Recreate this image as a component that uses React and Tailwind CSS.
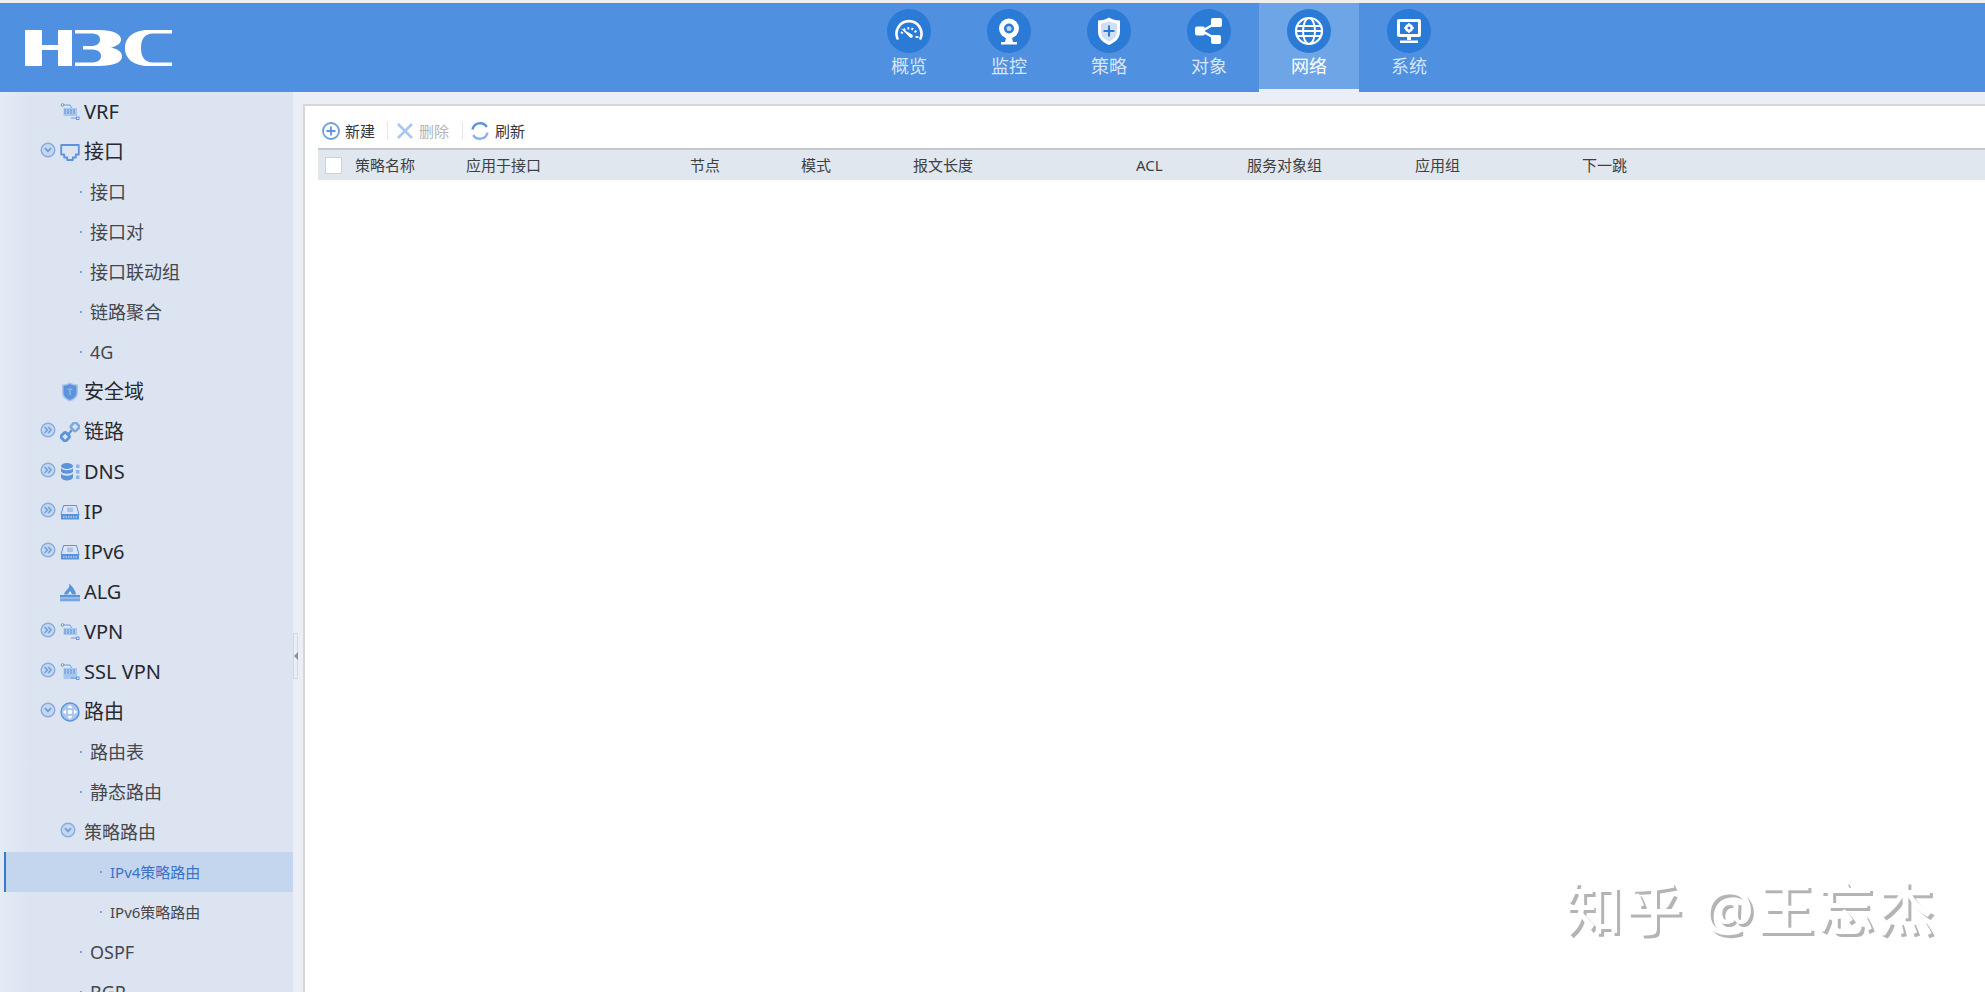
import React from 'react';

const Logo = () => (
  <svg width="148" height="38" viewBox="0 0 148 38" className="block">
    <g fill="#fff">
      {/* H */}
      <rect x="0" y="0" width="17" height="36" />
      <rect x="33" y="0" width="14" height="36" />
      <rect x="16" y="15" width="18" height="5" />
      {/* 3 */}
      <path d="M50 0H74C88 0 96 4 96 9.500C96 13.500 92 16 86 17.500C93 19 97 22 97 26.500C97 32.500 88 36 74 36H50V32.500H66C73 32.500 76 30 76 26C76 22 73 19.500 66 19.500H58V16H66C72 16 75 13.500 75 9.500C75 5.500 72 3.500 66 3.500H50Z" />
      {/* C */}
      <path d="M147 0H124C109 0 100 7 100 18C100 29 109 36 124 36H147V32.500H128C119 32.500 116 26 116 18C116 10 119 3.500 128 3.500H147Z" />
    </g>
  </svg>
);

const Circle = ({ children }) => (
  <div className="w-[44px] h-[44px] rounded-full bg-[#2b7ad6] flex items-center justify-center">
    <svg width="30" height="30" viewBox="0 0 30 30" fill="none">{children}</svg>
  </div>
);

const navItems = [
  {
    label: '概览',
    icon: (
      <>
        <path d="M3.500 22.500A12.500 12.500 0 1 1 26.500 22.500" stroke="#fff" strokeWidth="2.600" strokeLinecap="round" />
        <path d="M7.500 17.500A8 8 0 0 1 22.500 17.500" stroke="#fff" strokeWidth="2.400" strokeDasharray="1.800 2.200" />
        <path d="M6.500 12l11.500 6.500c1.700 1.300.6 4-1.700 3.200z" fill="#fff" />
        <path d="M21.500 21h3" stroke="#fff" strokeWidth="2" />
      </>
    ),
  },
  {
    label: '监控',
    icon: (
      <>
        <circle cx="15" cy="12.500" r="10" fill="#fff" />
        <circle cx="15" cy="12.500" r="5" fill="#2b7ad6" />
        <circle cx="15" cy="12.500" r="2.500" fill="#bcd6f5" />
        <path d="M12 22h6l1 4h-8zM7 26h16v2.500H7z" fill="#fff" />
      </>
    ),
  },
  {
    label: '策略',
    icon: (
      <>
        <path d="M15 1.500c3 2 7 3 11 3v11c0 7-5 11-11 13.500C9 26.500 4 22.500 4 15.500v-11c4 0 8-1 11-3z" fill="#fff" />
        <path d="M15 5c2.500 1.500 5.500 2.200 8 2.500v8c0 5-3.500 8-8 10-4.500-2-8-5-8-10v-8c2.500-.3 5.500-1 8-2.500z" fill="#cfe0f6" />
        <path d="M15 9.500v11M9.500 15h11" stroke="#2b7ad6" strokeWidth="2" />
      </>
    ),
  },
  {
    label: '对象',
    icon: (
      <>
        <path d="M8 15L22 7M8 15l14 8" stroke="#fff" strokeWidth="2.500" />
        <rect x="1" y="10.500" width="10" height="9" rx="2" fill="#fff" />
        <rect x="17" y="2" width="11" height="9" rx="2" fill="#fff" />
        <rect x="17" y="19" width="10" height="9" rx="2" fill="#fff" />
      </>
    ),
  },
  {
    label: '网络',
    icon: (
      <>
        <circle cx="15" cy="15" r="13" stroke="#fff" strokeWidth="2.200" />
        <ellipse cx="15" cy="15" rx="6" ry="13" stroke="#fff" strokeWidth="2" />
        <path d="M3.500 10h23M3.500 20h23M2 15h26" stroke="#fff" strokeWidth="2" />
      </>
    ),
  },
  {
    label: '系统',
    icon: (
      <>
        <rect x="3" y="3" width="24" height="18" rx="2" fill="#fff" />
        <rect x="6" y="6" width="18" height="12" fill="#2b7ad6" />
        <circle cx="15" cy="12" r="4" fill="#fff" />
        <circle cx="15" cy="12" r="1.500" fill="#2b7ad6" />
        <path d="M15 7v2M15 15v2M10 12h2M18 12h2" stroke="#fff" strokeWidth="1.500" />
        <path d="M13 21h4v3h-4zM6 24.500h18V27H6z" fill="#fff" />
      </>
    ),
  },
];

const Expander = ({ open }) => (
  <svg width="16" height="16" viewBox="0 0 16 16" fill="none" className="shrink-0 mt-[-4px]">
    <circle cx="8" cy="8" r="6.800" fill="#c6d6ef" stroke="#86ace0" strokeWidth="1.400" />
    {open ? (
      <path d="M5 6.200L8 9.400l3-3.200" stroke="#6f9fd8" strokeWidth="1.900" />
    ) : (
      <path d="M4.600 5L7.400 8 4.600 11M8.200 5L11 8 8.200 11" stroke="#6f9fd8" strokeWidth="1.600" />
    )}
  </svg>
);

const blue = '#5b93dc';

const VpnGlyph = ({ box }) => (
  <svg width="20" height="20" viewBox="0 0 20 20" fill="none">
    <circle cx="2.500" cy="3" r="1.400" stroke={blue} strokeWidth=".9" />
    <path d="M4 3h6l1.500 3" stroke={blue} strokeWidth=".9" />
    <rect x="3.500" y="6" width="13.500" height={box} fill="#a9c7ee" />
    <path d="M5 7v5M8 7v5M11 7v5M14 7v5" stroke={blue} strokeWidth="1" />
    <path d="M11 16h6" stroke={blue} strokeWidth=".9" />
    <rect x="16.500" y="15" width="2.500" height="2.500" stroke={blue} strokeWidth=".9" />
  </svg>
);

const IpCard = () => (
  <svg width="20" height="20" viewBox="0 0 20 20" fill="none">
    <path d="M3.500 3.500h13l2.500 9H1z" stroke={blue} strokeWidth="1" />
    <rect x="7" y="5.500" width="6" height="4.500" fill="#a9c4ea" />
    <rect x="1" y="12.500" width="18" height="5" fill={blue} />
    <path d="M3 15h14" stroke="#dfe7f3" strokeWidth="1" strokeDasharray="1.500 1" />
  </svg>
);

const sideIcons = {
  vrf: <VpnGlyph box={8} />,
  vpn: <VpnGlyph box={7} />,
  ssl: <VpnGlyph box={11} />,
  port: (
    <svg width="20" height="20" viewBox="0 0 20 20" fill="none">
      <path d="M1.200 3h17.600v9.500h-3v3h-3v2.500H7.200v-2.500h-3v-3h-3z" stroke={blue} strokeWidth="1.800" strokeLinejoin="round" />
    </svg>
  ),
  shield: (
    <svg width="20" height="20" viewBox="0 0 20 20">
      <path d="M10 .5c2.700 1.300 5.500 2 8 2v8.500c0 4.300-3.500 7-8 8.500-4.500-1.500-8-4.200-8-8.500V2.500c2.500 0 5.300-.7 8-2z" fill="#a9c7ee" />
      <path d="M10 2c2.200 1 4.500 1.700 6.500 1.800V11c0 3.400-2.900 5.700-6.500 7-3.600-1.300-6.500-3.600-6.500-7V3.800C5.500 3.700 7.800 3 10 2z" fill={blue} />
      <path d="M7.500 6.500h5v1.500h-1.700v5H9.200V8H7.500z" fill="#8db3e6" />
    </svg>
  ),
  link: (
    <svg width="20" height="20" viewBox="0 0 20 20" fill="none">
      <path d="M7 13.500l6.500-7" stroke={blue} strokeWidth="2.400" />
      <rect x="11.500" y="1.300" width="7" height="7" rx="2" transform="rotate(45 15 4.800)" stroke="#7fa8de" strokeWidth="2.600" />
      <rect x="1.700" y="11.200" width="7" height="7" rx="2" transform="rotate(45 5.200 14.700)" stroke={blue} strokeWidth="2.800" />
    </svg>
  ),
  dns: (
    <svg width="20" height="20" viewBox="0 0 20 20">
      <ellipse cx="7" cy="4" rx="6" ry="3" fill={blue} />
      <path d="M1 6c1 1.500 3 2.200 6 2.200S12 7.500 13 6v3.500c-1 1.500-3 2.200-6 2.200s-5-.7-6-2.200z" fill={blue} />
      <path d="M1 11.500c1 1.500 3 2.200 6 2.200s5-.7 6-2.200v4c-1 2-3 3-6 3s-5-1-6-3z" fill={blue} />
      <rect x="16" y="2.500" width="3.500" height="3.500" fill="#8db3e6" />
      <rect x="16" y="8" width="3.500" height="3.500" fill="#8db3e6" />
      <rect x="16" y="13.500" width="3.500" height="3.500" fill="#8db3e6" />
    </svg>
  ),
  ip: <IpCard />,
  alg: (
    <svg width="20" height="20" viewBox="0 0 20 20" fill="none">
      <path d="M4 12.500c.5-3 3-4.500 4.500-6.500.7-1 1-2.500.7-4.500C12 4 15.500 8 16 12.500z" fill={blue} />
      <path d="M8 12.500c.3-1.500 1.300-2.500 2-3.500.8 1 1.800 2 2 3.500z" fill="#dfe6f2" />
      <rect x="0" y="13" width="20" height="2.500" fill={blue} />
      <rect x="0" y="16.300" width="20" height="3" fill="#79a6e0" />
    </svg>
  ),
  route: (
    <svg width="20" height="20" viewBox="0 0 20 20" fill="none">
      <circle cx="10" cy="10" r="9" fill="#a9c7ee" stroke={blue} strokeWidth="1.400" />
      <path d="M10 2.800l2.600 3.200H7.400zM10 17.200L7.400 14h5.200zM2.800 10L6 7.400v5.200zM17.200 10L14 12.600V7.400z" fill="#fff" />
      <circle cx="10" cy="10" r="2.200" fill="#fff" />
    </svg>
  ),
};

const rows = [
  { text: 'VRF', level: 1, icon: 'vrf' },
  { text: '接口', level: 1, icon: 'port', exp: 'open' },
  { text: '接口', level: 2 },
  { text: '接口对', level: 2 },
  { text: '接口联动组', level: 2 },
  { text: '链路聚合', level: 2 },
  { text: '4G', level: 2 },
  { text: '安全域', level: 1, icon: 'shield' },
  { text: '链路', level: 1, icon: 'link', exp: 'closed' },
  { text: 'DNS', level: 1, icon: 'dns', exp: 'closed' },
  { text: 'IP', level: 1, icon: 'ip', exp: 'closed' },
  { text: 'IPv6', level: 1, icon: 'ip', exp: 'closed' },
  { text: 'ALG', level: 1, icon: 'alg' },
  { text: 'VPN', level: 1, icon: 'vpn', exp: 'closed' },
  { text: 'SSL VPN', level: 1, icon: 'ssl', exp: 'closed' },
  { text: '路由', level: 1, icon: 'route', exp: 'open' },
  { text: '路由表', level: 2 },
  { text: '静态路由', level: 2 },
  { text: '策略路由', level: 'group' },
  { text: 'IPv4策略路由', level: 3, active: true },
  { text: 'IPv6策略路由', level: 3 },
  { text: 'OSPF', level: 2 },
  { text: 'BGP', level: 2 },
];

const Dot = () => <span className="w-[2px] h-[2px] bg-[#5b93dc] rounded-full shrink-0" />;

const SideRow = ({ row }) => {
  if (row.level === 1) {
    return (
      <div className="h-[40px] flex items-center text-[20px] text-[#26292e] pl-[40px]">
        <div className="w-[20px] flex justify-start">{row.exp && <Expander open={row.exp === 'open'} />}</div>
        <div className="w-[20px] h-[20px] shrink-0 mr-[4px]">{sideIcons[row.icon]}</div>
        <span>{row.text}</span>
      </div>
    );
  }
  if (row.level === 'group') {
    return (
      <div className="h-[40px] flex items-center text-[18px] text-[#44474c] pl-[60px]">
        <div className="w-[24px]">
          <Expander open />
        </div>
        <span>{row.text}</span>
      </div>
    );
  }
  if (row.level === 2) {
    return (
      <div className="h-[40px] flex items-center gap-[8px] text-[18px] text-[#44474c] pl-[80px]">
        <Dot />
        <span>{row.text}</span>
      </div>
    );
  }
  return (
    <div
      className={
        row.active
          ? 'h-[40px] ml-[4px] flex items-center gap-[8px] text-[15px] text-[#3a72c8] pl-[94px] bg-[#c3d6ee] border-l-2 border-[#3a78cc]'
          : 'h-[40px] flex items-center gap-[8px] text-[15px] text-[#44474c] pl-[100px]'
      }
    >
      <Dot />
      <span>{row.text}</span>
    </div>
  );
};

const columns = [
  { label: '策略名称', w: 'w-[111px]' },
  { label: '应用于接口', w: 'w-[224px]' },
  { label: '节点', w: 'w-[111px]' },
  { label: '模式', w: 'w-[112px]' },
  { label: '报文长度', w: 'w-[223px]' },
  { label: 'ACL', w: 'w-[111px]' },
  { label: '服务对象组', w: 'w-[168px]' },
  { label: '应用组', w: 'w-[167px]' },
  { label: '下一跳', w: 'w-[120px]' },
];

export default function App() {
  return (
    <div className="w-[1985px] h-[992px] overflow-hidden relative flex flex-col bg-white font-['Noto_Sans','Noto_Sans_CJK_SC',sans-serif]">
      <div className="h-[3px] bg-[#efefef] shrink-0" />

      {/* 顶部导航 */}
      <header className="h-[89px] shrink-0 bg-[#4f90e0] flex">
        <div className="w-[859px] pl-[25px] pt-[27px]">
          <Logo />
        </div>
        <nav className="flex">
          {navItems.map((item) =>
            item.label === '网络' ? (
              <div key={item.label} className="w-[100px] bg-[#6ea5e6] border-b-[3px] border-[#e8eff9] flex flex-col items-center pt-[6px]">
                <Circle>{item.icon}</Circle>
                <span className="text-[18px] leading-[26px] text-white">{item.label}</span>
              </div>
            ) : (
              <div key={item.label} className="w-[100px] flex flex-col items-center pt-[6px]">
                <Circle>{item.icon}</Circle>
                <span className="text-[18px] leading-[26px] text-[#d6e5f8]">{item.label}</span>
              </div>
            )
          )}
        </nav>
      </header>

      <div className="flex-1 flex min-h-0">
        {/* 左侧菜单 */}
        <aside className="w-[293px] shrink-0 bg-linear-to-r from-[#e3ebf7] to-[#dde4f1] to-[30px] overflow-hidden">
          {rows.map((row, i) => (
            <SideRow key={i} row={row} />
          ))}
        </aside>

        <main className="flex-1 bg-[#eceef5] pl-[10px] pt-[12px] relative min-w-0">
          {/* 折叠手柄 */}
          <div className="absolute left-0 top-[541px] w-[5px] h-[46px] border border-[#d3d9e3] flex items-center justify-center">
            <span className="w-0 h-0 border-y-[4px] border-y-transparent border-r-[4px] border-r-[#8a8f98]" />
          </div>

          <div className="h-full bg-white border-l-2 border-t-2 border-[#d4d6da] pl-[13px] pt-[12px]">
            <div className="h-[26px] flex items-center text-[15px] text-[#33363b]">
              <svg width="20" height="20" viewBox="0 0 20 20" fill="none" className="ml-[3px]">
                <circle cx="10" cy="10" r="8" stroke="#6f9fd8" strokeWidth="1.800" />
                <path d="M10 5.500v9M5.500 10h9" stroke="#5b93dc" strokeWidth="1.800" />
              </svg>
              <span className="ml-[4px]">新建</span>
              <span className="w-px h-[18px] bg-[#e4e6ea] ml-[12px]" />
              <svg width="20" height="20" viewBox="0 0 20 20" fill="none" className="ml-[7px]">
                <path d="M3 3l14 14M17 3L3 17" stroke="#a9c7ee" strokeWidth="2.500" />
              </svg>
              <span className="ml-[4px] text-[#b3b5b8]">删除</span>
              <span className="w-px h-[18px] bg-[#e4e6ea] ml-[13px]" />
              <svg width="20" height="20" viewBox="0 0 20 20" fill="none" className="ml-[7px]">
                <path d="M2.500 8.500A7.800 7.800 0 0 1 16.800 6" stroke="#5b93dc" strokeWidth="2.400" />
                <path d="M17.500 11.500A7.800 7.800 0 0 1 3.200 14" stroke="#8db3e6" strokeWidth="2.400" />
              </svg>
              <span className="ml-[5px]">刷新</span>
            </div>

            <div className="h-[32px] mt-[4px] bg-[#e1e7ee] border-t-2 border-[#c4c8ce] flex items-center text-[15px] text-[#3c3f44]">
              <span className="w-[17px] h-[17px] ml-[7px] mr-[13px] shrink-0 bg-white border border-[#cfd3d9]" />
              {columns.map((c) => (
                <span key={c.label} className={c.w + ' shrink-0'}>
                  {c.label}
                </span>
              ))}
            </div>
          </div>
        </main>
      </div>

      {/* 水印 */}
      <div className="absolute left-[1565px] top-[876px] text-[57px] leading-[64px] font-medium tracking-[3px] whitespace-nowrap text-white [text-shadow:3px_3px_0_#b4b4b4]">
        知乎 @王忘杰
      </div>
    </div>
  );
}
